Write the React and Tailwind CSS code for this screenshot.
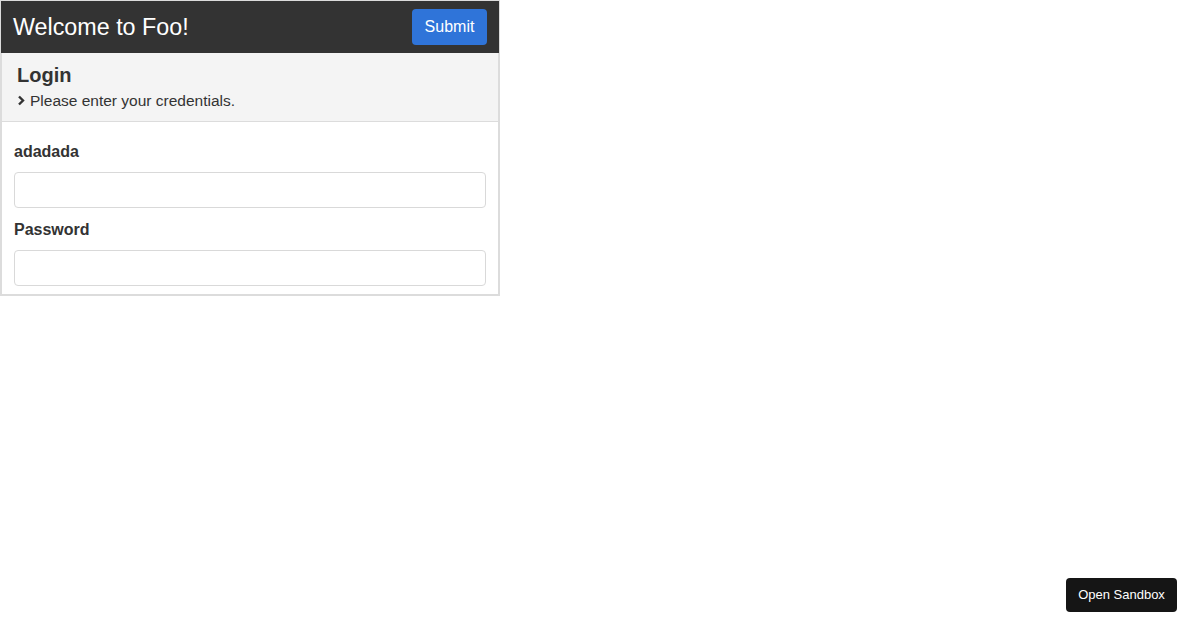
import React from "react";

function Chevron() {
  return (
    <svg width="9" height="11" viewBox="0 0 9 11" className="mr-[4px] inline-block">
      <path d="M2 1.5 L6 5.5 L2 9.5" fill="none" stroke="#333" strokeWidth="2.4" />
    </svg>
  );
}

export default function App() {
  return (
    <div className="relative h-[630px] w-[1200px] bg-white text-[#333] font-['Liberation_Sans',Arial,sans-serif]">
      <div className="w-[500px] border border-[#dcdcdc]">
        <div className="flex h-[52px] items-center justify-between bg-[#333] pl-[12px] pr-[12px]">
          <span className="text-[23.3px] text-white">Welcome to Foo!</span>
          <button className="h-[36px] w-[75px] rounded-[4px] bg-[#2f74d9] text-[16px] text-white">
            Submit
          </button>
        </div>
        <div className="border border-t-0 border-[#dcdcdc]">
          <div className="h-[69px] border-b border-[#dcdcdc] bg-[#f4f4f4] px-[15px] pt-[9px]">
            <div className="text-[20px] font-bold leading-[26px]">Login</div>
            <div className="flex items-center text-[15.5px] leading-[25px] text-[#333]">
              <Chevron />
              Please enter your credentials.
            </div>
          </div>
          <div className="px-[12px] pb-[8px] pt-[18px]">
            <label className="block text-[16px] font-bold leading-[24px]">adadada</label>
            <input className="mt-[8px] block h-[36px] w-full rounded-[4px] border border-[#d9d9d9]" />
            <label className="mt-[10px] block text-[16px] font-bold leading-[24px]">Password</label>
            <input className="mt-[8px] block h-[36px] w-full rounded-[4px] border border-[#d9d9d9]" />
          </div>
        </div>
      </div>
      <button className="absolute left-[1066px] top-[578px] h-[34px] w-[111px] rounded-[4px] bg-[#151515] text-[13px] text-white">
        Open Sandbox
      </button>
    </div>
  );
}
